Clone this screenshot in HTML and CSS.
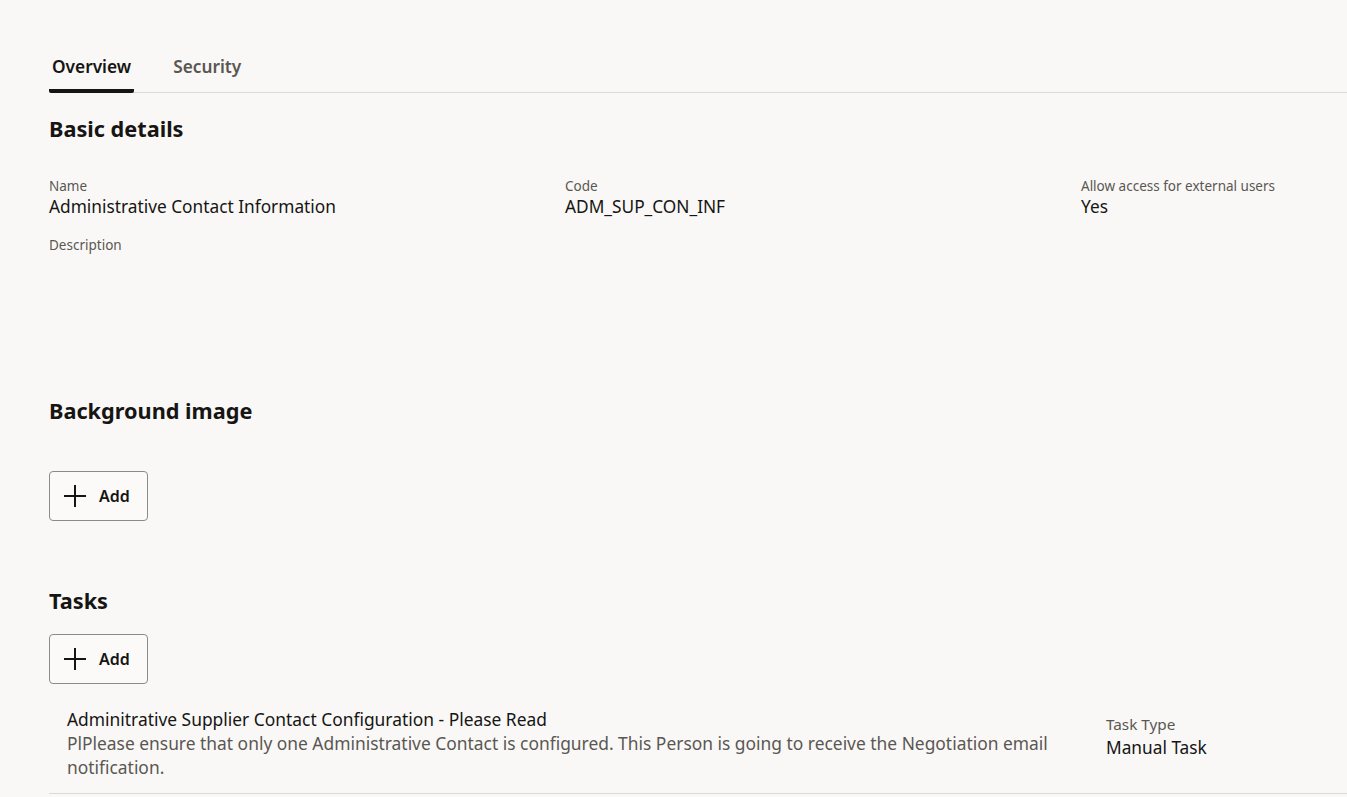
FILE: index.html
```html
<!DOCTYPE html>
<html lang="en">
<head>
    <meta charset="UTF-8">
    <title>Overview</title>
    <link rel="stylesheet" href="styles.css">
</head>
<body>
    <div class="page">
        <div class="tabs">
            <div class="tab active">Overview</div>
            <div class="tab">Security</div>
        </div>

        <h2 class="section-title first">Basic details</h2>
        <div class="fields">
            <div class="field">
                <div class="label">Name</div>
                <div class="value">Administrative Contact Information</div>
            </div>
            <div class="field">
                <div class="label">Code</div>
                <div class="value">ADM_SUP_CON_INF</div>
            </div>
            <div class="field">
                <div class="label">Allow access for external users</div>
                <div class="value">Yes</div>
            </div>
            <div class="field">
                <div class="label">Description</div>
                <div class="value"></div>
            </div>
        </div>

        <h2 class="section-title bg-title">Background image</h2>
        <button class="add-btn bg-add">
            <svg width="24" height="24" viewBox="0 0 24 24"><path d="M12 1v22M1 12h22" stroke="#161513" stroke-width="2" fill="none"/></svg>
            <span>Add</span>
        </button>

        <h2 class="section-title tasks-title">Tasks</h2>
        <button class="add-btn">
            <svg width="24" height="24" viewBox="0 0 24 24"><path d="M12 1v22M1 12h22" stroke="#161513" stroke-width="2" fill="none"/></svg>
            <span>Add</span>
        </button>

        <div class="task-row">
            <div class="task-main">
                <div class="task-title">Adminitrative Supplier Contact Configuration - Please Read</div>
                <div class="task-desc">PlPlease ensure that only one Administrative Contact is configured. This Person is going to receive the Negotiation email notification.</div>
            </div>
            <div class="task-type">
                <div class="label">Task Type</div>
                <div class="value">Manual Task</div>
            </div>
        </div>
    </div>
</body>
</html>
```

FILE: styles.css
```css
body {
    margin: 0;
    background: #f9f8f6;
    color: #161513;
    font-family: "Noto Sans", sans-serif;
    overflow: hidden;
}
.page {
    padding: 49px 0 0 49px;
}
.tabs {
    display: flex;
    border-bottom: 1px solid #dcdad6;
}
.tab {
    font-size: 17.3px;
    line-height: 24px;
    font-weight: 600;
    color: #5a5753;
    padding: 6px 3px 10px;
    margin-right: 36px;
    border-bottom: 4px solid transparent;
    margin-bottom: -1px;
}
.tab.active {
    color: #161513;
    border-bottom-color: #161513;
    border-radius: 2px;
}
.section-title {
    font-size: 21.7px;
    font-weight: 700;
    margin: 0;
    line-height: 30px;
}
.section-title.first {
    margin-top: 21px;
}
.fields {
    display: grid;
    grid-template-columns: 516px 516px 516px;
    row-gap: 17px;
    margin-top: 33px;
}
.label {
    font-size: 13.5px;
    color: #5a5753;
    line-height: 18px;
}
.value {
    font-size: 17.3px;
    line-height: 24px;
    min-height: 22px;
}
.bg-title {
    margin-top: 120px;
}
.add-btn {
    display: flex;
    align-items: center;
    gap: 12px;
    width: 99px;
    height: 50px;
    padding: 0 0 0 13px;
    background: #fbfaf9;
    border: 1px solid #8e8a86;
    border-radius: 4px;
    font-family: inherit;
    font-size: 16px;
    font-weight: 600;
    color: #161513;
}
.bg-add {
    margin-top: 45px;
}
.tasks-title {
    margin-top: 65px;
}
.tasks-title + .add-btn {
    margin-top: 18px;
}
.task-row {
    display: flex;
    border-bottom: 1px solid #dcdad6;
    padding: 23px 0 14px 18px;
}
.task-main {
    flex: 1;
    padding-right: 40px;
}
.task-title {
    font-size: 17.4px;
    line-height: 24px;
}
.task-desc {
    font-size: 17.4px;
    line-height: 24px;
    color: #5a5753;
}
.task-type {
    width: 241px;
    padding-top: 6px;
}
.task-type .label {
    font-size: 15.3px;
    line-height: 22px;
}
.task-type .value {
    line-height: 26px;
}
```
